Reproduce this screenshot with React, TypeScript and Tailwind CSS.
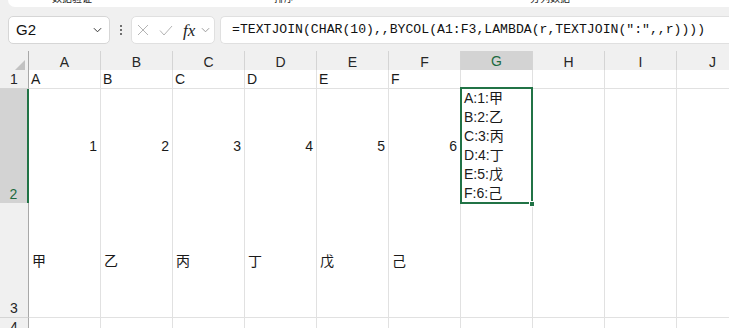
import React from "react";

const cols = ["A", "B", "C", "D", "E", "F", "G", "H", "I", "J"];
const heads = ["A", "B", "C", "D", "E", "F"];
const nums = ["1", "2", "3", "4", "5", "6"];
const stems = ["甲", "乙", "丙", "丁", "戊", "己"];

const font = { fontFamily: '"Liberation Sans", "Noto Sans CJK SC", sans-serif' };

function ColHeader({ label }: { label: string }) {
  const selected = label === "G";
  return (
    <div
      className={`flex items-center justify-center border-r border-[#d4d4d4] text-[14px] ${
        selected
          ? "bg-[#d3d3d3] border-b-2 border-b-[#217346] text-[#1d6a3f]"
          : "border-b border-b-[#a8a8a8] text-[#262626]"
      }`}
    >
      {label}
    </div>
  );
}

function RowHeader({ n, selected }: { n: string; selected?: boolean }) {
  return (
    <div
      className={`flex items-end justify-center border-b border-[#d4d4d4] text-[14px] leading-[18px] ${
        selected
          ? "bg-[#d3d3d3] border-r-2 border-r-[#217346] text-[#1d6a3f]"
          : "bg-[#f0f0f0] border-r border-r-[#a8a8a8] text-[#262626]"
      }`}
    >
      {n}
    </div>
  );
}

function Cell({ children, className = "" }: { children?: React.ReactNode; className?: string }) {
  return (
    <div className={`flex border-r border-b border-[#e1e1e1] bg-white text-[14px] text-[#1a1a1a] ${className}`}>
      {children}
    </div>
  );
}

function Chevron({ className = "" }: { className?: string }) {
  return (
    <svg viewBox="0 0 10 6" className={className} fill="none" stroke="currentColor" strokeWidth="1.1">
      <path d="M1 1l4 4 4-4" />
    </svg>
  );
}

export default function App() {
  return (
    <div className="w-[729px] h-[328px] overflow-hidden bg-white" style={font}>
      {/* toolbar */}
      <div className="bg-[#f0f0f0] h-[51px]">
        <div className="ml-[8px] h-[7px] bg-white rounded-bl-[8px] overflow-hidden">
          <div className="-mt-[10px] flex text-[10px] leading-[16px] text-[#222]" style={{ fontFamily: '"Noto Sans CJK SC", sans-serif' }}>
            <span className="ml-[44px]">数据验证</span>
            <span className="ml-[44px]">┘</span>
            <span className="ml-[128px]">排序</span>
            <span className="ml-[236px]">分列数据</span>
            <span className="ml-[100px]">┘</span>
          </div>
        </div>
        <div className="flex items-center mt-[9px] h-[28px]">
          <div className="ml-[8px] w-[102px] h-[28px] bg-white border border-[#d6d6d6] rounded-[5px] flex items-center pl-[7px] pr-[7px]">
            <span className="text-[15px] text-[#111] flex-1">G2</span>
            <Chevron className="w-[9px] h-[6px] text-[#333]" />
          </div>
          <div className="w-[21px] flex flex-col items-center gap-[2px]">
            <span className="w-[2px] h-[2px] bg-[#444] rounded-full" />
            <span className="w-[2px] h-[2px] bg-[#444] rounded-full" />
            <span className="w-[2px] h-[2px] bg-[#444] rounded-full" />
          </div>
          <div className="w-[84px] h-[28px] bg-white border border-[#e0e0e0] rounded-[5px] flex items-center pl-[5px]">
            <svg viewBox="0 0 12 12" className="w-[12px] h-[12px] text-[#b4b4b4]" fill="none" stroke="currentColor" strokeWidth="1">
              <path d="M1 1l10 10M11 1L1 11" />
            </svg>
            <svg viewBox="0 0 14 11" className="ml-[10px] w-[14px] h-[11px] text-[#b4b4b4]" fill="none" stroke="currentColor" strokeWidth="1">
              <path d="M1 5.5l4 4.5L13 1" />
            </svg>
            <span className="ml-[10px] italic text-[17px] leading-none text-[#222]" style={{ fontFamily: '"Liberation Serif", serif' }}>
              fx
            </span>
            <Chevron className="ml-[6px] w-[9px] h-[6px] text-[#9a9a9a]" />
          </div>
          <div className="ml-[5px] flex-1 h-[28px] bg-white border border-[#e0e0e0] border-r-0 rounded-l-[5px] flex items-center pl-[11px]">
            <span className="text-[13.15px] text-[#111] whitespace-pre" style={{ fontFamily: '"Liberation Mono", monospace' }}>
              =TEXTJOIN(CHAR(10),,BYCOL(A1:F3,LAMBDA(r,TEXTJOIN(":",,r))))
            </span>
          </div>
        </div>
      </div>

      {/* header row */}
      <div className="grid grid-cols-[29px_repeat(10,72px)] h-[19px] bg-[#f0f0f0]">
        <div className="flex items-end justify-end border-r border-b border-[#a8a8a8] pr-[3px] pb-[2px]">
          <svg viewBox="0 0 10 10" className="w-[11px] h-[11px]">
            <path d="M10 0V10H0Z" fill="#c2c2c2" />
          </svg>
        </div>
        {cols.map((c) => (
          <ColHeader key={c} label={c} />
        ))}
      </div>

      {/* row 1 */}
      <div className="grid grid-cols-[29px_repeat(10,72px)] h-[19px]">
        <RowHeader n="1" />
        {cols.map((c, i) => (
          <Cell key={c} className="items-end pl-[2px] leading-[18px]">
            {heads[i] ?? ""}
          </Cell>
        ))}
      </div>

      {/* row 2 */}
      <div className="grid grid-cols-[29px_repeat(10,72px)] h-[114px]">
        <RowHeader n="2" selected />
        {cols.map((c, i) => {
          if (c === "G") {
            return (
              <Cell key={c} className="relative flex-col pl-[3px] leading-[19px]">
                {heads.map((h, j) => (
                  <span key={h} className="whitespace-nowrap">
                    {h}:{nums[j]}:{stems[j]}
                  </span>
                ))}
                <div className="absolute -left-[1px] -top-[2px] -right-[1px] -bottom-[1px] border-2 border-[#217346] pointer-events-none" />
                <div className="absolute -right-[3px] -bottom-[4px] w-[6px] h-[6px] bg-[#217346] border border-white" />
              </Cell>
            );
          }
          return (
            <Cell key={c} className="items-center justify-end pr-[3px]">
              {nums[i] ?? ""}
            </Cell>
          );
        })}
      </div>

      {/* row 3 */}
      <div className="grid grid-cols-[29px_repeat(10,72px)] h-[115px]">
        <RowHeader n="3" />
        {cols.map((c, i) => (
          <Cell key={c} className="items-center pl-[3px] pt-[3px]">
            {stems[i] ?? ""}
          </Cell>
        ))}
      </div>

      {/* row 4 */}
      <div className="grid grid-cols-[29px_repeat(10,72px)] h-[19px]">
        <RowHeader n="4" />
        {cols.map((c) => (
          <Cell key={c} />
        ))}
      </div>
    </div>
  );
}
